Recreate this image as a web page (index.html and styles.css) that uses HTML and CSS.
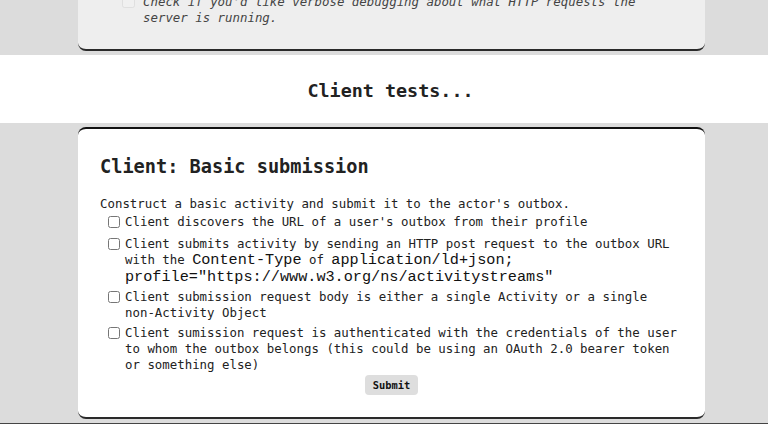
FILE: index.html
```html
<!DOCTYPE html>
<html lang="en">
<head>
    <meta charset="UTF-8">
    <meta name="viewport" content="width=device-width, initial-scale=1.0">
    <title>ActivityPub Test Suite</title>
    <link rel="stylesheet" href="styles.css">
</head>
<body>
    <div class="box options">
        <label class="option">
            <input type="checkbox" disabled>
            <span>Check if you'd like verbose debugging about what HTTP requests the server is running.</span>
        </label>
    </div>

    <div class="banner">
        <h1>Client tests...</h1>
    </div>

    <form class="box test">
        <h2>Client: Basic submission</h2>
        <p>Construct a basic activity and submit it to the actor's outbox.</p>
        <ul class="checks">
            <li>
                <input type="checkbox">
                <span>Client discovers the URL of a user's outbox from their profile</span>
            </li>
            <li>
                <input type="checkbox">
                <span>Client submits activity by sending an HTTP post request to the outbox URL with the <code>Content-Type</code> of <code>application/ld+json; profile="https://www.w3.org/ns/activitystreams"</code></span>
            </li>
            <li>
                <input type="checkbox">
                <span>Client submission request body is either a single Activity or a single non-Activity Object</span>
            </li>
            <li>
                <input type="checkbox">
                <span>Client sumission request is authenticated with the credentials of the user to whom the outbox belongs (this could be using an OAuth 2.0 bearer token or something else)</span>
            </li>
        </ul>
        <div class="actions">
            <button type="button">Submit</button>
        </div>
    </form>

    <div class="next"></div>
</body>
</html>
```

FILE: styles.css
```css
body {
    margin: 0;
    background-color: #dcdcdc;
    font-family: "DejaVu Sans Mono", monospace;
    font-size: 12.4px;
    line-height: 16px;
    color: #222;
}
.box {
    box-sizing: border-box;
    width: 627px;
    margin-left: 78px;
    border-radius: 8px;
    border-bottom: 2px solid #2a2a2a;
}
.options {
    margin-top: -6px;
    padding: 0 22px 24px 44px;
    background-color: #eee;
    border-top-left-radius: 0;
    border-top-right-radius: 0;
}
.option {
    display: flex;
    align-items: flex-start;
    line-height: 15.5px;
}
.option input {
    margin: 1px 8px 0 0;
    opacity: 0.4;
}
.option span {
    font-style: italic;
    color: #444;
}
.banner {
    margin: 4px 0 4px;
    height: 68px;
    background-color: #fff;
    display: flex;
    align-items: center;
    justify-content: center;
    padding-left: 13px;
    padding-top: 3px;
    box-sizing: border-box;
}
.banner h1 {
    margin: 0;
    font-size: 18.4px;
    line-height: 22px;
}
.test {
    display: block;
    background-color: #fff;
    border-top: 2px solid #111;
    padding: 27px 22px 22px 22px;
}
.test h2 {
    margin: 0 0 18px;
    font-size: 18.6px;
    line-height: 22px;
}
.test p {
    margin: 0 0 2px;
}
.checks {
    list-style: none;
    margin: 0;
    padding: 0 0 0 4px;
}
.checks li {
    display: flex;
    align-items: flex-start;
    margin-bottom: 4px;
}
.checks li:first-child {
    margin-bottom: 6px;
}
.checks li:nth-child(2) {
    margin-bottom: 3px;
}
.checks input {
    flex: none;
    width: 12px;
    height: 12px;
    margin: 2px 5px 0 4px;
}
code {
    font-family: "Liberation Mono", monospace;
    font-size: 15.2px;
    line-height: 17px;
    color: #111;
}
.actions {
    text-align: center;
    margin-top: -2px;
}
.actions button {
    font-family: "DejaVu Sans Mono", monospace;
    font-size: 10.4px;
    font-weight: bold;
    color: #111;
    background-color: #dedede;
    border: none;
    border-radius: 4px;
    padding: 4px 8px;
}
.next {
    margin-top: 4px;
    height: 10px;
    border-top: 3px solid #444;
    background-color: #dcdcdc;
}
```
